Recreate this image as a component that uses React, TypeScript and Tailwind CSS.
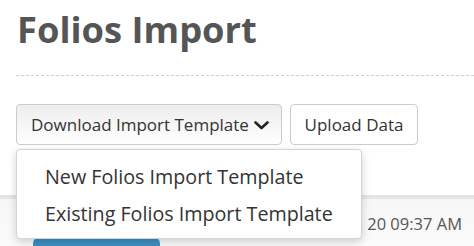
export default function App() {
  return (
    <main className="relative h-[246px] overflow-hidden bg-white font-['Open_Sans',sans-serif] text-[#333]">
      <div className="px-4 pt-[6px]">
        <h1 className="pl-[1px] text-[36.3px] font-bold leading-[46px] text-[#555]">Folios Import</h1>
        <div className="mt-[23px] -mr-4 border-t border-dashed border-[#cfcfcf]" />

        <div className="relative mt-[28px] flex gap-2">
          <button className="flex h-[41px] w-[266px] items-center gap-[4px] rounded-[4px] border border-[#cccccc] bg-gradient-to-b from-[#ededed] to-white pl-[14px] text-[17px] text-[#333]">
            <span>Download Import Template</span>
            <svg width="17" height="10" viewBox="0 0 17 10" className="mt-[1px]">
              <path d="M2.5 2.5 L8.5 8 L14.5 2.5" fill="none" stroke="#222" strokeWidth="2.6" strokeLinecap="round" strokeLinejoin="round" />
            </svg>
          </button>
          <button className="h-[41px] w-[128px] rounded-[4px] border border-[#cccccc] bg-white text-[17px] text-[#333]">
            Upload Data
          </button>

          <div className="absolute left-0 top-[45px] z-10 w-[346px] rounded-[4px] border border-[#d4d4d4] bg-white pb-[6px] pt-[8px] shadow-[0_3px_8px_rgba(0,0,0,0.18)]">
            <div className="pl-[28px] text-[19.7px] leading-[37px] text-[#333]">New Folios Import Template</div>
            <div className="pl-[28px] text-[19.7px] leading-[37px] text-[#333]">Existing Folios Import Template</div>
          </div>
        </div>
      </div>

      <section className="mt-[50px] border-t-4 border-[#e4e4e4] bg-gradient-to-b from-[#f6f6f6] to-white pl-[33px] pr-3 pt-[14px]">
        <div className="text-right text-[16.5px] leading-[22px] text-[#555]">Last updated Jan 20 09:37 AM</div>
        <button aria-label="Import" className="mt-[1px] h-[36px] w-[127px] rounded-[8px] bg-[#3d8fc4]" />
      </section>
    </main>
  );
}
